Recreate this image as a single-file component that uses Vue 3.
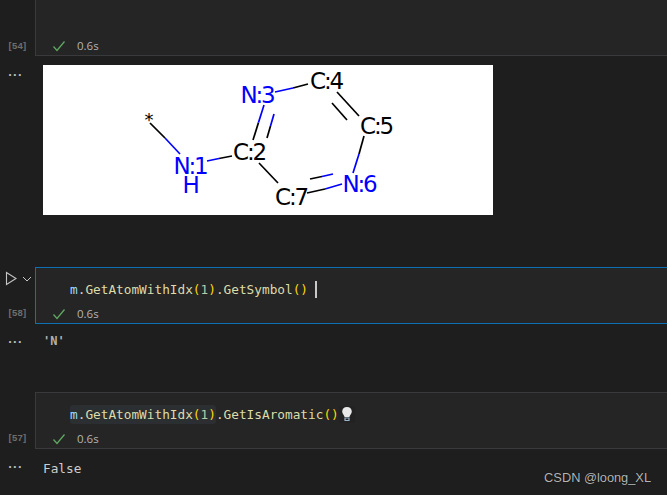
<template>
  <div class="notebook">
    <!-- cell 54 -->
    <div class="cell">
      <div class="gutter">
        <span class="count">[54]</span>
      </div>
      <div class="cell-box cell-tall">
        <div class="code-area"></div>
        <div class="status">
          <svg class="check" width="16" height="16" viewBox="0 0 16 16">
            <path d="M2.5 8.5 L6 12.5 L13.5 3.5" fill="none" stroke="#5fa85f" stroke-width="1.3" />
          </svg>
          <span>0.6s</span>
        </div>
      </div>
    </div>
    <div class="output output-image">
      <span class="dots">...</span>
      <div class="mol-wrap">
        <svg class="mol" width="450" height="150" viewBox="43 64 450 150">
          <g fill="none" stroke-width="1.7">
            <path v-for="(b, i) in blackBonds" :key="'k' + i" :d="b" stroke="#000" />
            <path v-for="(b, i) in blueBonds" :key="'b' + i" :d="b" stroke="#0000ff" />
          </g>
          <text
            v-for="a in atoms"
            :key="a.label + a.x"
            class="atom"
            :class="{ star: a.label === '*' }"
            :x="a.x"
            :y="a.y"
            :fill="a.color"
            text-anchor="middle"
          >{{ a.label }}</text>
        </svg>
      </div>
    </div>

    <!-- cell 58 -->
    <div class="cell">
      <div class="gutter">
        <div class="run">
          <svg width="14" height="16" viewBox="0 0 14 16">
            <path d="M3.5 1.5 L3.5 13.5 L13 7.5 Z" fill="none" stroke="#c5c5c5" stroke-width="1.1" />
          </svg>
          <svg width="10" height="10" viewBox="0 0 10 10">
            <path d="M1 3 L5 7 L9 3" fill="none" stroke="#c5c5c5" stroke-width="1" />
          </svg>
        </div>
        <span class="count">[58]</span>
      </div>
      <div class="cell-box box-focus">
        <div class="code-area">
          <code class="code"><span class="var">m</span>.<span class="fn">GetAtomWithIdx</span><span class="paren">(</span><span class="num">1</span><span class="paren">)</span>.<span class="fn">GetSymbol</span><span class="paren">()</span></code>
          <span class="cursor"></span>
        </div>
        <div class="status">
          <svg class="check" width="16" height="16" viewBox="0 0 16 16">
            <path d="M2.5 8.5 L6 12.5 L13.5 3.5" fill="none" stroke="#5fa85f" stroke-width="1.3" />
          </svg>
          <span>0.6s</span>
        </div>
      </div>
    </div>
    <div class="output output-n">
      <span class="dots">...</span>
      <pre class="out-text small">'N'</pre>
    </div>

    <!-- cell 57 -->
    <div class="cell">
      <div class="gutter">
        <span class="count">[57]</span>
      </div>
      <div class="cell-box">
        <div class="code-area">
          <code class="code"><span class="hl"><span class="var">m</span>.<span class="fn">GetAtomWithIdx</span><span class="paren">(</span><span class="num">1</span><span class="paren">)</span></span>.<span class="fn">GetIsAromatic</span><span class="paren">()</span></code>
          <span class="bulb">
            <svg width="12" height="16" viewBox="0 0 12 16">
              <path d="M6 1 C3 1 1.2 3 1.2 5.4 C1.2 7.6 3 8.8 3.6 11 L8.4 11 C9 8.8 10.8 7.6 10.8 5.4 C10.8 3 9 1 6 1 Z" fill="#e8e8e8" />
              <path d="M4 12 H8 V14.5 H4 Z" fill="none" stroke="#9cb4c8" stroke-width="1.2" />
            </svg>
          </span>
        </div>
        <div class="status">
          <svg class="check" width="16" height="16" viewBox="0 0 16 16">
            <path d="M2.5 8.5 L6 12.5 L13.5 3.5" fill="none" stroke="#5fa85f" stroke-width="1.3" />
          </svg>
          <span>0.6s</span>
        </div>
      </div>
    </div>
    <div class="output">
      <span class="dots">...</span>
      <pre class="out-text">False</pre>
    </div>

    <div class="watermark">CSDN @loong_XL</div>
  </div>
</template>

<script setup>
const blackBonds = [
  'M150 122 L165 137',
  'M219 157.5 L232 155',
  'M253 139 L258.5 121.5',
  'M267 137 L270.5 125',
  'M293 87 L308 83',
  'M337 91 L359 115',
  'M332 102 L347 119',
  'M364 135 L359 153',
  'M325 188 L307 192',
  'M322 175.5 L310 178',
  'M259 162 L278 182'
]

const blueBonds = [
  'M165 137 L180 153',
  'M207 160 L219 157.5',
  'M258.5 121.5 L264 104',
  'M270.5 125 L274 113',
  'M275 91 L293 87',
  'M359 153 L353 172',
  'M342 183 L325 188',
  'M333 173 L322 175.5'
]

const atoms = [
  { label: '*', x: 149, y: 125, color: '#000' },
  { label: 'N:1', x: 190, y: 173, color: '#0000ff' },
  { label: 'H', x: 190, y: 192, color: '#0000ff' },
  { label: 'C:2', x: 249, y: 159, color: '#000' },
  { label: 'N:3', x: 257, y: 102, color: '#0000ff' },
  { label: 'C:4', x: 326, y: 88, color: '#000' },
  { label: 'C:5', x: 376, y: 133, color: '#000' },
  { label: 'N:6', x: 359, y: 191, color: '#0000ff' },
  { label: 'C:7', x: 291, y: 204, color: '#000' }
]
</script>

<style>
html,
body {
  margin: 0;
  background: #1e1e1e;
}
</style>

<style scoped>
.notebook {
  position: relative;
  width: 667px;
  height: 495px;
  overflow: hidden;
  background: #1e1e1e;
  color: #cccccc;
  font-family: "Open Sans", "Noto Sans", sans-serif;
}

.cell {
  display: flex;
  height: 57px;
}

.gutter {
  width: 35px;
  flex: none;
  display: flex;
  flex-direction: column;
  justify-content: flex-end;
  align-items: center;
  position: relative;
}

.count {
  font-family: "Liberation Sans", sans-serif;
  font-size: 9.5px;
  font-weight: bold;
  letter-spacing: 0.3px;
  color: #6e6e6e;
  line-height: 12px;
  margin-bottom: 5px;
}

.run {
  position: absolute;
  top: 4px;
  left: 3px;
  display: flex;
  align-items: center;
  gap: 5px;
}

.cell-box {
  flex: 1;
  display: flex;
  flex-direction: column;
  background: #252526;
  border: 1px solid #3a3a3c;
  border-right: none;
  box-sizing: border-box;
}

.cell-tall {
  border-top: none;
  margin-bottom: 1px;
}

.box-focus {
  border-color: #0f6fb3;
}

.code-area {
  flex: 1;
  display: flex;
  align-items: center;
  padding: 6px 0 0 34px;
}

.code {
  font-family: "DejaVu Sans Mono", monospace;
  font-size: 12.75px;
  line-height: 19px;
  color: #d4d4d4;
  white-space: pre;
}

.var {
  color: #9cdcfe;
}

.fn {
  color: #dcdcaa;
}

.paren {
  color: #ffd700;
}

.num {
  color: #b5cea8;
}

.hl {
  background: #2b2f31;
  display: inline-block;
  border-radius: 3px;
}

.cursor {
  width: 2px;
  height: 17px;
  margin-left: 7px;
  background: #c8c8c8;
}

.bulb {
  display: flex;
  justify-content: center;
  align-items: center;
  width: 16px;
  height: 17px;
  background: #222223;
}

.status {
  height: 19px;
  flex: none;
  display: flex;
  align-items: center;
  padding-left: 15px;
  font-size: 11.5px;
  color: #b4b4b4;
  gap: 10px;
}

.check {
  flex: none;
}

.output {
  display: flex;
  height: 47px;
}

.output-image {
  height: 210px;
}

.output-n {
  height: 68px;
}

.dots {
  width: 35px;
  flex: none;
  text-align: center;
  font-family: "Liberation Sans", sans-serif;
  font-weight: bold;
  font-size: 13px;
  letter-spacing: 1.3px;
  line-height: 14px;
  margin-top: 8px;
  color: #bbbbbb;
  padding-right: 4px;
  box-sizing: border-box;
}

.mol-wrap {
  margin: 8px 0 0 8px;
}

.mol {
  display: block;
  background: #ffffff;
}

.atom {
  font-family: "DejaVu Sans", sans-serif;
  font-size: 23px;
  letter-spacing: -2.2px;
}

.star {
  font-size: 18px;
  letter-spacing: 0;
}

.out-text {
  margin: 11px 0 0 8px;
  font-family: "DejaVu Sans Mono", monospace;
  font-size: 12.75px;
  line-height: 17px;
  color: #cccccc;
}

.small {
  font-size: 12px;
  margin-top: 9px;
  font-weight: bold;
  color: #b0b0b0;
}

.watermark {
  position: absolute;
  right: 16px;
  bottom: 10px;
  font-family: "Liberation Sans", sans-serif;
  font-size: 12.8px;
  line-height: 14px;
  color: #b5b5b5;
  text-shadow: 0 0 1px #000;
}
</style>
